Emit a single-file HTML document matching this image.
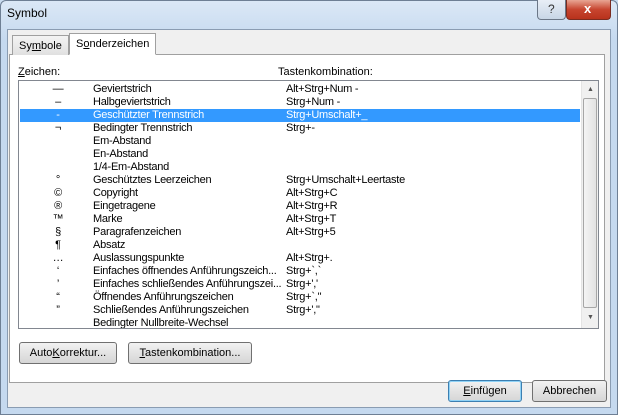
<!DOCTYPE html>
<html><head><meta charset="utf-8"><style>
*{margin:0;padding:0;box-sizing:border-box}
body{width:618px;height:415px;overflow:hidden;font-family:"Liberation Sans",sans-serif;font-size:11px;color:#000;background:#c9dcf0;position:relative}
.frame{position:absolute;left:0;top:0;width:618px;height:415px;border:1px solid #6e7f94;border-radius:6px 6px 0 0;background:linear-gradient(#dbe8f6,#c5d9ef 40px,#c5d9ef)}
.title{position:absolute;left:7px;top:6px;font-size:12px}
.client{position:absolute;left:7px;top:29px;width:604px;height:379px;background:#f0f0f0;border:1px solid #8a9cb2}
.panel{position:absolute;left:9px;top:54px;width:596px;height:329px;background:#fff;border:1px solid #a0a0a0}
.tab{position:absolute;height:22px;border:1px solid #a0a0a0;border-bottom:none;padding:4px 6px 0}
.list{position:absolute;left:18px;top:80px;width:581px;height:249px;border:1px solid #828790;background:#fff;overflow:hidden}
.row{position:absolute;left:1px;height:13px;width:560px;line-height:13px;white-space:nowrap;letter-spacing:-0.25px}
.row span{position:absolute}
.s{left:28px;width:20px;text-align:center}.n{left:73px}.k{left:266px}
.sel{background:#3399ff;color:#fff}
.sb{position:absolute;right:0;top:0;width:17px;height:247px;background:#f0f0f0;border-left:1px solid #e4e4e4}
.btn{position:absolute;height:22px;border:1px solid #707070;border-radius:3px;background:linear-gradient(#f2f2f2,#e3e3e3 50%,#d6d6d6);text-align:center;line-height:20px}
.cap{position:absolute;top:0;height:20px;border:1px solid #6b7787;border-top:none;border-radius:0 0 4px 4px}
</style></head><body>
<div class="frame"></div>
<div class="title">Symbol</div>
<div class="cap" style="left:537px;width:29px;background:linear-gradient(#e8eef6,#c8d6e6)"><span style="position:absolute;left:10px;top:2px;color:#333;font-size:12px">?</span></div>
<div class="cap" style="left:566px;width:45px;background:linear-gradient(#e8a593,#c7452f 50%,#b8321c);border-color:#7a2c20"><span style="position:absolute;left:17px;top:1px;color:#fff;font-weight:bold;font-size:13px">x</span></div>
<div class="client"></div>
<div class="panel"></div>
<div class="tab" style="left:12px;top:35px;height:20px;background:linear-gradient(#f4f4f4,#e0e0e0)">Sy<u>m</u>bole</div>
<div class="tab" style="left:69px;top:33px;height:22px;background:#fff;border-bottom:1px solid #fff">S<u>o</u>nderzeichen</div>
<div style="position:absolute;left:18px;top:66px"><u>Z</u>eichen:</div>
<div style="position:absolute;left:278px;top:66px">Tastenkombination:</div>
<div class="list">
<div class="row" style="top:2px"><span class="s">—</span><span class="n">Geviertstrich</span><span class="k">Alt+Strg+Num -</span></div>
<div class="row" style="top:15px"><span class="s">–</span><span class="n">Halbgeviertstrich</span><span class="k">Strg+Num -</span></div>
<div class="row sel" style="top:28px"><span class="s">-</span><span class="n">Geschützter Trennstrich</span><span class="k">Strg+Umschalt+_</span></div>
<div class="row" style="top:41px"><span class="s">¬</span><span class="n">Bedingter Trennstrich</span><span class="k">Strg+-</span></div>
<div class="row" style="top:54px"><span class="n">Em-Abstand</span></div>
<div class="row" style="top:67px"><span class="n">En-Abstand</span></div>
<div class="row" style="top:80px"><span class="n">1/4-Em-Abstand</span></div>
<div class="row" style="top:93px"><span class="s">°</span><span class="n">Geschütztes Leerzeichen</span><span class="k">Strg+Umschalt+Leertaste</span></div>
<div class="row" style="top:106px"><span class="s">©</span><span class="n">Copyright</span><span class="k">Alt+Strg+C</span></div>
<div class="row" style="top:119px"><span class="s">®</span><span class="n">Eingetragene</span><span class="k">Alt+Strg+R</span></div>
<div class="row" style="top:132px"><span class="s">™</span><span class="n">Marke</span><span class="k">Alt+Strg+T</span></div>
<div class="row" style="top:145px"><span class="s">§</span><span class="n">Paragrafenzeichen</span><span class="k">Alt+Strg+5</span></div>
<div class="row" style="top:158px"><span class="s">¶</span><span class="n">Absatz</span></div>
<div class="row" style="top:171px"><span class="s">…</span><span class="n">Auslassungspunkte</span><span class="k">Alt+Strg+.</span></div>
<div class="row" style="top:184px"><span class="s">‘</span><span class="n">Einfaches öffnendes Anführungszeich...</span><span class="k">Strg+`,`</span></div>
<div class="row" style="top:197px"><span class="s">’</span><span class="n">Einfaches schließendes Anführungszei...</span><span class="k">Strg+','</span></div>
<div class="row" style="top:210px"><span class="s">“</span><span class="n">Öffnendes Anführungszeichen</span><span class="k">Strg+`,"</span></div>
<div class="row" style="top:223px"><span class="s">”</span><span class="n">Schließendes Anführungszeichen</span><span class="k">Strg+',"</span></div>
<div class="row" style="top:236px"><span class="n">Bedingter Nullbreite-Wechsel</span></div>
<div class="sb"><div style="position:absolute;left:5px;top:5px;font-size:7px;color:#555">▲</div><div style="position:absolute;left:1px;top:17px;width:14px;height:210px;border:1px solid #a6a6a6;border-radius:2px;background:linear-gradient(90deg,#f4f4f4,#e2e2e2)"></div><div style="position:absolute;left:5px;top:233px;font-size:7px;color:#555">▼</div></div>
</div>
<div class="btn" style="left:19px;top:342px;width:98px">Auto<u>K</u>orrektur...</div>
<div class="btn" style="left:128px;top:342px;width:124px"><u>T</u>astenkombination...</div>
<div class="btn" style="left:448px;top:380px;width:74px;border-color:#3c7fb1;box-shadow:inset 0 0 0 1px #8fd2f6"><u>E</u>infügen</div>
<div class="btn" style="left:532px;top:380px;width:75px">Abbrechen</div>
</body></html>
